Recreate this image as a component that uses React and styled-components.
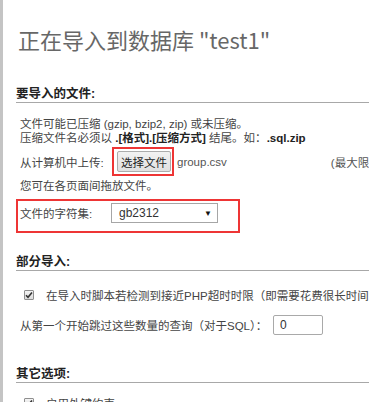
import React from "react";
import styled, { createGlobalStyle } from "styled-components";

const Global = createGlobalStyle`
  html, body { margin: 0; padding: 0; background: #fff; }
  body {
    font-family: "Liberation Sans", "Noto Sans CJK SC", sans-serif;
    color: #333;
  }
`;

const Page = styled.div`
  box-sizing: border-box;
  width: 369px;
  height: 402px;
  overflow: hidden;
  border-left: 3px solid #c4c4c4;
  padding-left: 13px;
  font-size: 11.5px;
`;

const Inner = styled.div`
  width: 560px;
`;

const Title = styled.h1`
  margin: 24px 0 0 2px;
  font-size: 22px;
  line-height: 30px;
  font-weight: normal;
  color: #676767;
  font-family: "Noto Sans CJK SC", "Liberation Sans", sans-serif;
`;

const Header = styled.h2`
  margin: ${(p) => p.$top}px 0 0 0;
  font-size: 12.5px;
  line-height: 16px;
  font-weight: bold;
  color: #222;
  border-bottom: 1px solid #a8a8a8;
`;

const Body = styled.div`
  display: flex;
  flex-direction: column;
  align-items: flex-start;
  padding-left: ${(p) => (p.$indent === undefined ? 4 : p.$indent)}px;
  padding-top: ${(p) => p.$top}px;
  color: #444;
`;

const Line = styled.div`
  line-height: 14px;
  white-space: nowrap;
  margin-top: ${(p) => p.$top || 0}px;
`;

const Strong = styled.b`
  color: #222;
`;

const Row = styled.div`
  display: flex;
  align-items: center;
  white-space: nowrap;
  margin-top: ${(p) => p.$top || 0}px;
`;

const Label = styled.span`
  width: ${(p) => p.$w}px;
  flex: none;
  white-space: nowrap;
`;

const Highlight = styled.div`
  display: flex;
  align-items: center;
  box-sizing: border-box;
  border: 2px solid #ee3535;
  padding: ${(p) => p.$pad};
  width: ${(p) => (p.$w ? `${p.$w}px` : "auto")};
  margin-top: ${(p) => p.$top || 0}px;
`;

const FileButton = styled.button`
  box-sizing: border-box;
  height: 21px;
  width: 54px;
  padding: 0;
  font-family: "Noto Sans CJK SC", sans-serif;
  font-size: 11.5px;
  color: #222;
  background: linear-gradient(#f2f2f2, #e0e0e0);
  border: 1px solid #acacac;
  border-radius: 2px;
`;

const FileName = styled.span`
  margin-left: 3px;
  color: #555;
`;

const Limit = styled.span`
  margin-left: 104px;
  color: #555;
`;

const Select = styled.div`
  box-sizing: border-box;
  display: flex;
  align-items: center;
  justify-content: space-between;
  width: 107px;
  height: 20px;
  padding: 0 5px 0 7px;
  border: 1px solid #a6a6a6;
  background: #fff;
  color: #333;
  font-size: 12px;
`;

const Arrow = styled.span`
  font-size: 8px;
  color: #111;
`;

const Check = styled.span`
  box-sizing: border-box;
  width: 10px;
  height: 10px;
  margin: 0 12px 0 2px;
  border: 1px solid #8f8f8f;
  border-radius: 1px;
  background: linear-gradient(#f4f4f4, #dcdcdc);
  display: inline-flex;
  align-items: center;
  justify-content: center;
  flex: none;
`;

const NumberInput = styled.div`
  box-sizing: border-box;
  width: 50px;
  height: 20px;
  padding-left: 6px;
  display: flex;
  align-items: center;
  border: 1px solid #a9a9a9;
  border-radius: 2px;
  color: #333;
  font-size: 12px;
`;

const CheckIcon = () => (
  <svg width="8" height="8" viewBox="0 0 8 8">
    <path d="M1 4.2 L3 6.2 L7 1.5" fill="none" stroke="#333" strokeWidth="1.6" />
  </svg>
);

export default function App() {
  return (
    <>
      <Global />
      <Page>
        <Inner>
          <Title>正在导入到数据库 "test1"</Title>

          <Header $top={32}>要导入的文件:</Header>
          <Body $top={14}>
            <Line>文件可能已压缩 (gzip, bzip2, zip) 或未压缩。</Line>
            <Line>
              压缩文件名必须以 <Strong>.[格式].[压缩方式]</Strong> 结尾。如：<Strong>.sql.zip</Strong>
            </Line>
            <Row $top={2}>
              <Label $w={92}>从计算机中上传:</Label>
              <Highlight $pad="2px 1px 2px 3px">
                <FileButton>选择文件</FileButton>
              </Highlight>
              <FileName>group.csv</FileName>
              <Limit>(最大限制: 2,048 KB)</Limit>
            </Row>
            <Line $top={3}>您可在各页面间拖放文件。</Line>
          </Body>
          <Body $top={0} $indent={0}>
            <Highlight $pad="2px 2px 8px 2px" $w={224} $top={6}>
              <Label $w={91}>文件的字符集:</Label>
              <Select>
                gb2312
                <Arrow>▼</Arrow>
              </Select>
            </Highlight>
          </Body>

          <Header $top={21}>部分导入:</Header>
          <Body $top={16} $indent={6}>
            <Row>
              <Check>
                <CheckIcon />
              </Check>
              在导入时脚本若检测到接近PHP超时时限（即需要花费很长时间）则允许中断。
            </Row>
          </Body>
          <Body $top={12}>
            <Row>
              <Label $w={253}>从第一个开始跳过这些数量的查询（对于SQL）：</Label>
              <NumberInput>0</NumberInput>
            </Row>
          </Body>

          <Header $top={31}>其它选项:</Header>
          <Body $top={12} $indent={6}>
            <Row>
              <Check>
                <CheckIcon />
              </Check>
              启用外键约束
            </Row>
          </Body>
        </Inner>
      </Page>
    </>
  );
}
